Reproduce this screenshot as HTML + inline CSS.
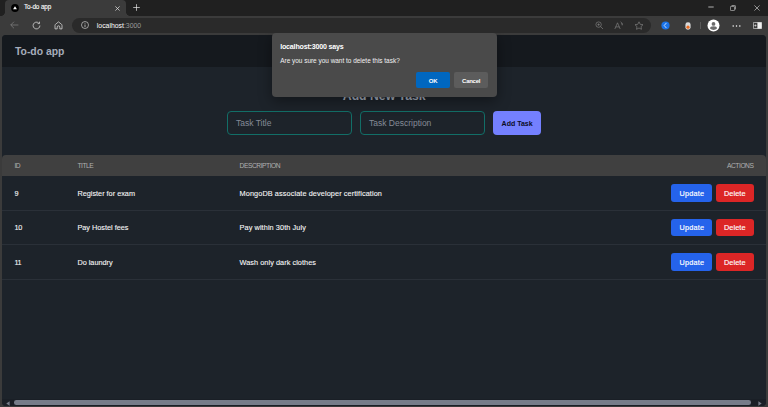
<!DOCTYPE html>
<html lang="en">
<head>
<meta charset="utf-8">
<title>To-do app</title>
<style>
*{box-sizing:border-box;margin:0;padding:0}
html,body{width:768px;height:407px;overflow:hidden}
body{position:relative;background:#3b3b3b;font-family:"Liberation Sans",sans-serif;color:#fff;-webkit-font-smoothing:antialiased}
.abs{position:absolute;white-space:nowrap;line-height:1}
/* browser chrome */
#tabstrip{position:absolute;left:0;top:0;width:768px;height:15.5px;background:#202020}
#tab{position:absolute;left:5px;top:0;width:121px;height:15.5px;background:#3b3b3b;border-radius:4px 4px 0 0}
#tab:before,#tab:after{content:"";position:absolute;bottom:0;width:4px;height:4px;background:radial-gradient(circle at 0 0,#202020 3.6px,#3b3b3b 4.2px)}
#tab:before{left:-4px}
#tab:after{right:-4px;background:radial-gradient(circle at 100% 0,#202020 3.6px,#3b3b3b 4.2px)}
#toolbar{position:absolute;left:0;top:15.5px;width:768px;height:20px;background:#3b3b3b}
#urlbar{position:absolute;left:71.7px;top:18.1px;width:579.3px;height:15px;border-radius:7.5px;background:#2a2a2a}
.chrome{font-family:"Liberation Sans",sans-serif}
/* page */
#page{position:absolute;left:2.4px;top:35.4px;width:763.6px;height:370.2px;background:#1d232a;border-radius:4px;overflow:hidden}
#nav{position:absolute;left:0;top:0;width:100%;height:31.2px;background:#15191e}
.inp{position:absolute;top:75.7px;height:24.2px;border:1px solid #126e67;border-radius:4px;background:#1d232a}
.ph{color:#858b97;font-size:8.5px}
#addbtn{position:absolute;left:490.6px;top:75.7px;width:48px;height:24.2px;border-radius:4px;background:#7480ff}
#thead{position:absolute;left:0;top:119.8px;width:100%;height:21px;background:#404040;border-radius:4px 4px 0 0}
.th{font-size:6.7px;color:#b0b0b0;letter-spacing:-0.46px}
.td{font-size:7.3px;color:#f6f6f6;-webkit-text-stroke:0.1px #f6f6f6}
.sep{position:absolute;left:0;width:100%;height:1px;background:#2a3038}
.btn{position:absolute;height:17.6px;border-radius:3px}
.bu{letter-spacing:0.2px}.bd{letter-spacing:0.1px}.upd{left:668.8px;width:41px;background:#2563eb}
.del{left:713.6px;width:37.8px;background:#dc2626}
.bt{font-size:7.3px;color:#fff;-webkit-text-stroke:0.15px #fff}
/* dialog */
#dlg{position:absolute;left:271.8px;top:33px;width:225px;height:63.6px;background:#4a4a4a;border-radius:4px;box-shadow:0 4px 14px rgba(0,0,0,.4);clip-path:inset(0 -40px -40px -40px round 4px 4px 0 0)}
#ok{position:absolute;left:144.3px;top:39.1px;width:34px;height:16.4px;border-radius:2px;background:#0067c0}
#cancel{position:absolute;left:182.4px;top:39.1px;width:34px;height:16.4px;border-radius:2px;background:#5c5c5c}
</style>
</head>
<body>
<!-- tab strip -->
<div id="tabstrip">
  <div id="tab">
    <svg class="abs" style="left:6.3px;top:3.9px" width="8" height="8" viewBox="0 0 8 8"><circle cx="4" cy="4" r="3.9" fill="#000"/><path d="M4 2.3 L5.9 5.3 L2.1 5.3 Z" fill="#fff"/></svg>
    <span class="abs chrome" id="tabtitle" style="left:19px;top:4.3px;font-size:6.4px;letter-spacing:-0.14px;color:#fff;-webkit-text-stroke:0.1px #fff">To-do app</span>
    <svg class="abs" style="left:110.2px;top:6px" width="5" height="5" viewBox="0 0 5 5"><path d="M0.4 0.4 L4.6 4.6 M4.6 0.4 L0.4 4.6" stroke="#e6e6e6" stroke-width="0.7" fill="none"/></svg>
  </div>
  <svg class="abs" style="left:132.5px;top:4px" width="7" height="7" viewBox="0 0 7 7"><path d="M3.5 0.2 V6.8 M0.2 3.5 H6.8" stroke="#e6e6e6" stroke-width="0.7" fill="none"/></svg>
  <!-- window controls -->
  <svg class="abs" style="left:707.8px;top:4.1px" width="6" height="6" viewBox="0 0 6 6"><path d="M0.3 3 H5.7" stroke="#fff" stroke-width="0.65"/></svg>
  <svg class="abs" style="left:730.3px;top:4.7px" width="6" height="6" viewBox="0 0 6 6"><rect x="0.4" y="1.4" width="4.2" height="4.2" rx="0.8" fill="none" stroke="#e0e0e0" stroke-width="0.6"/><path d="M1.6 0.4 H4.4 Q5.6 0.4 5.6 1.6 V4.4" fill="none" stroke="#e0e0e0" stroke-width="0.6"/></svg>
  <svg class="abs" style="left:753.6px;top:4.8px" width="6" height="6" viewBox="0 0 6 6"><path d="M0.4 0.4 L5.6 5.6 M5.6 0.4 L0.4 5.6" stroke="#e0e0e0" stroke-width="0.6"/></svg>
</div>
<!-- toolbar -->
<div id="toolbar"></div>
<svg class="abs" style="left:9.5px;top:21.4px" width="9" height="8" viewBox="0 0 9 8"><path d="M8.4 4 H0.8 M4 0.7 L0.7 4 L4 7.3" fill="none" stroke="#8a8a8a" stroke-width="0.65"/></svg>
<svg class="abs" style="left:31.5px;top:20.8px" width="9" height="9" viewBox="0 0 9 9"><path d="M7.9 4.5 A3.4 3.4 0 1 1 6.6 1.85" fill="none" stroke="#e6e6e6" stroke-width="0.7"/><path d="M5.6 1.7 H7.5 V-0.2" fill="none" stroke="#e6e6e6" stroke-width="0.7" transform="translate(0,0.9)"/></svg>
<svg class="abs" style="left:53.6px;top:21px" width="9" height="9" viewBox="0 0 9 9"><path d="M1 4.3 Q1 3.7 1.5 3.3 L4.5 0.9 L7.5 3.3 Q8 3.7 8 4.3 V7.9 H5.8 V6.1 A1.3 1.3 0 0 0 3.2 6.1 V7.9 H1 Z" fill="none" stroke="#e6e6e6" stroke-width="0.7" stroke-linejoin="round"/></svg>
<div id="urlbar"></div>
<svg class="abs" style="left:81.1px;top:21.2px" width="8" height="8" viewBox="0 0 8 8"><circle cx="4" cy="4" r="3.5" fill="none" stroke="#e6e6e6" stroke-width="0.6"/><path d="M4 3.5 V6" stroke="#e6e6e6" stroke-width="0.7"/><circle cx="4" cy="2.3" r="0.45" fill="#e6e6e6"/></svg>
<span class="abs chrome" id="url" style="left:96.8px;top:22.6px;font-size:6.9px;letter-spacing:-0.01px;color:#fff">localhost<span style="color:#9a9a9a">:3000</span></span>
<!-- url bar right icons -->
<svg class="abs" style="left:594.6px;top:21.4px" width="9" height="9" viewBox="0 0 9 9"><circle cx="3.6" cy="3.6" r="2.7" fill="none" stroke="#8c8c8c" stroke-width="0.6"/><path d="M5.6 5.6 L8 8 M2.4 3.6 H4.8 M3.6 2.4 V4.8" stroke="#8c8c8c" stroke-width="0.6" fill="none"/></svg>
<svg class="abs" style="left:614px;top:21px" width="10" height="9" viewBox="0 0 10 9"><path d="M0.8 8 L3.5 1.8 L6.2 8 M1.7 5.9 H5.3" fill="none" stroke="#8c8c8c" stroke-width="0.6"/><path d="M6.6 0.6 Q8.6 2 8.2 4.4 M7.2 2.6 Q8.2 2.6 9 3.6" fill="none" stroke="#8c8c8c" stroke-width="0.55"/></svg>
<svg class="abs" style="left:634.2px;top:21px" width="10" height="9" viewBox="0 0 10 9"><path d="M5 0.8 L6.2 3.3 L9 3.7 L7 5.6 L7.5 8.3 L5 7 L2.5 8.3 L3 5.6 L1 3.7 L3.8 3.3 Z" fill="none" stroke="#8c8c8c" stroke-width="0.6" stroke-linejoin="round"/></svg>
<!-- extensions -->
<svg class="abs" style="left:661.3px;top:21.3px" width="9" height="9" viewBox="0 0 9 9"><circle cx="4.5" cy="4.5" r="4.1" fill="#1a73e8"/><path d="M5.2 2.2 L3.2 4.5 L5.2 6.8" fill="none" stroke="#cfe4ff" stroke-width="0.9" stroke-linecap="round" stroke-linejoin="round"/></svg>
<svg class="abs" style="left:684.6px;top:21.6px" width="6" height="8" viewBox="0 0 6 8"><rect x="0.4" y="0.3" width="5.2" height="7.4" rx="2.4" fill="#d9d9d9"/><circle cx="3" cy="5.2" r="1.6" fill="#ea6a1f"/></svg>
<div class="abs" style="left:699.6px;top:21.8px;width:1px;height:7.4px;background:#5a5a5a"></div>
<svg class="abs" style="left:706.8px;top:19.4px" width="13" height="13" viewBox="0 0 13 13"><circle cx="6.5" cy="6.5" r="6" fill="#fff"/><circle cx="6.5" cy="4.9" r="1.9" fill="#6b6b6b"/><path d="M3 9.6 Q3 7.3 6.5 7.3 Q10 7.3 10 9.6 Q8.6 11 6.5 11 Q4.4 11 3 9.6 Z" fill="#6b6b6b"/></svg>
<svg class="abs" style="left:731.5px;top:24.7px" width="9" height="2" viewBox="0 0 9 2"><circle cx="1.2" cy="1" r="0.75" fill="#fff"/><circle cx="4.5" cy="1" r="0.75" fill="#fff"/><circle cx="7.8" cy="1" r="0.75" fill="#fff"/></svg>
<svg class="abs" style="left:752.6px;top:22.1px" width="9" height="7" viewBox="0 0 9 7"><rect x="0.35" y="0.35" width="8.3" height="6.3" rx="0.9" fill="none" stroke="#f0f0f0" stroke-width="0.7"/><rect x="4.4" y="0.4" width="4.2" height="6.2" fill="#f0f0f0"/><path d="M1.3 3.5 H3.5 M2.4 2.4 V4.6" stroke="#f0f0f0" stroke-width="0.6"/></svg>

<!-- page -->
<div id="page">
  <div id="nav"></div>
  <span class="abs" id="brand" style="left:12.6px;top:11.7px;font-size:10.4px;font-weight:bold;color:#a6adbb">To-do app</span>
  <span class="abs" id="heading" style="left:340.4px;top:54.8px;font-size:12.25px;font-weight:bold;color:#a6adbb">Add New Task</span>
  <div class="inp" style="left:224.6px;width:124.8px"></div>
  <span class="abs ph" id="ph1" style="left:233.6px;top:83.7px">Task Title</span>
  <div class="inp" style="left:357.9px;width:124.6px"></div>
  <span class="abs ph" id="ph2" style="left:366.6px;top:83.7px">Task Description</span>
  <div id="addbtn"></div>
  <span class="abs" id="addtxt" style="left:499.2px;top:84.2px;font-size:7px;font-weight:bold;color:#0a0c1f">Add Task</span>

  <div id="thead"></div>
  <span class="abs th" id="th1" style="left:12px;top:127.5px">ID</span>
  <span class="abs th" id="th2" style="left:75px;top:127.5px">TITLE</span>
  <span class="abs th" id="th3" style="left:237.2px;top:127.5px">DESCRIPTION</span>
  <span class="abs th" id="th4" style="left:724.6px;top:127.5px">ACTIONS</span>

  <div class="sep" style="top:174.8px"></div>
  <div class="sep" style="top:208.7px"></div>
  <div class="sep" style="top:243.6px"></div>

  <span class="abs td" id="r1a" style="left:12px;top:154.4px">9</span>
  <span class="abs td" id="r1b" style="left:75px;top:154.4px">Register for exam</span>
  <span class="abs td" id="r1c" style="letter-spacing:0.1px;left:237.2px;top:154.4px">MongoDB associate developer certification</span>
  <div class="btn upd" style="top:148.8px"></div><span class="abs bt bu" style="left:677.2px;top:154.4px">Update</span>
  <div class="btn del" style="top:148.8px"></div><span class="abs bt bd" style="left:721.5px;top:154.4px">Delete</span>

  <span class="abs td" id="r2a" style="letter-spacing:-0.3px;left:12px;top:188.8px">10</span>
  <span class="abs td" id="r2b" style="left:75px;top:188.8px">Pay Hostel fees</span>
  <span class="abs td" id="r2c" style="letter-spacing:0.09px;left:237.2px;top:188.8px">Pay within 30th July</span>
  <div class="btn upd" style="top:183.2px"></div><span class="abs bt bu" style="left:677.2px;top:188.8px">Update</span>
  <div class="btn del" style="top:183.2px"></div><span class="abs bt bd" style="left:721.5px;top:188.8px">Delete</span>

  <span class="abs td" id="r3a" style="letter-spacing:-0.5px;left:12px;top:223.2px">11</span>
  <span class="abs td" id="r3b" style="left:75px;top:223.2px">Do laundry</span>
  <span class="abs td" id="r3c" style="letter-spacing:0.055px;left:237.2px;top:223.2px">Wash only dark clothes</span>
  <div class="btn upd" style="top:217.6px"></div><span class="abs bt bu" style="left:677.2px;top:223.2px">Update</span>
  <div class="btn del" style="top:217.6px"></div><span class="abs bt bd" style="left:721.5px;top:223.2px">Delete</span>

  <!-- scrollbar -->
  <div class="abs" style="left:0;top:364px;width:100%;height:6.2px;background:#1a1f26"></div>
  <div class="abs" style="left:11.2px;top:365px;width:737px;height:4.6px;border-radius:2.3px;background:#767c89"></div>
  <svg class="abs" style="left:3.6px;top:365.2px" width="4" height="5" viewBox="0 0 4 5"><path d="M3.6 0.3 V4.7 L0.3 2.5 Z" fill="#767c89"/></svg>
  <svg class="abs" style="left:755.4px;top:365.2px" width="4" height="5" viewBox="0 0 4 5"><path d="M0.4 0.3 V4.7 L3.7 2.5 Z" fill="#767c89"/></svg>
</div>

<!-- dialog -->
<div id="dlg">
  <span class="abs chrome" id="dtitle" style="left:8.4px;top:10.5px;font-size:7.1px;letter-spacing:-0.19px;font-weight:bold;color:#fff">localhost:3000 says</span>
  <span class="abs chrome" id="dmsg" style="left:8.4px;top:24.9px;font-size:6.45px;color:#f2f2f2">Are you sure you want to delete this task?</span>
  <div id="ok"></div><span class="abs chrome" id="oktxt" style="left:156.9px;top:44.9px;font-size:6px;font-weight:bold;color:#fff">OK</span>
  <div id="cancel"></div><span class="abs chrome" id="cantxt" style="left:190.3px;top:44.9px;font-size:6px;letter-spacing:-0.28px;font-weight:bold;color:#fff">Cancel</span>
</div>
</body>
</html>
